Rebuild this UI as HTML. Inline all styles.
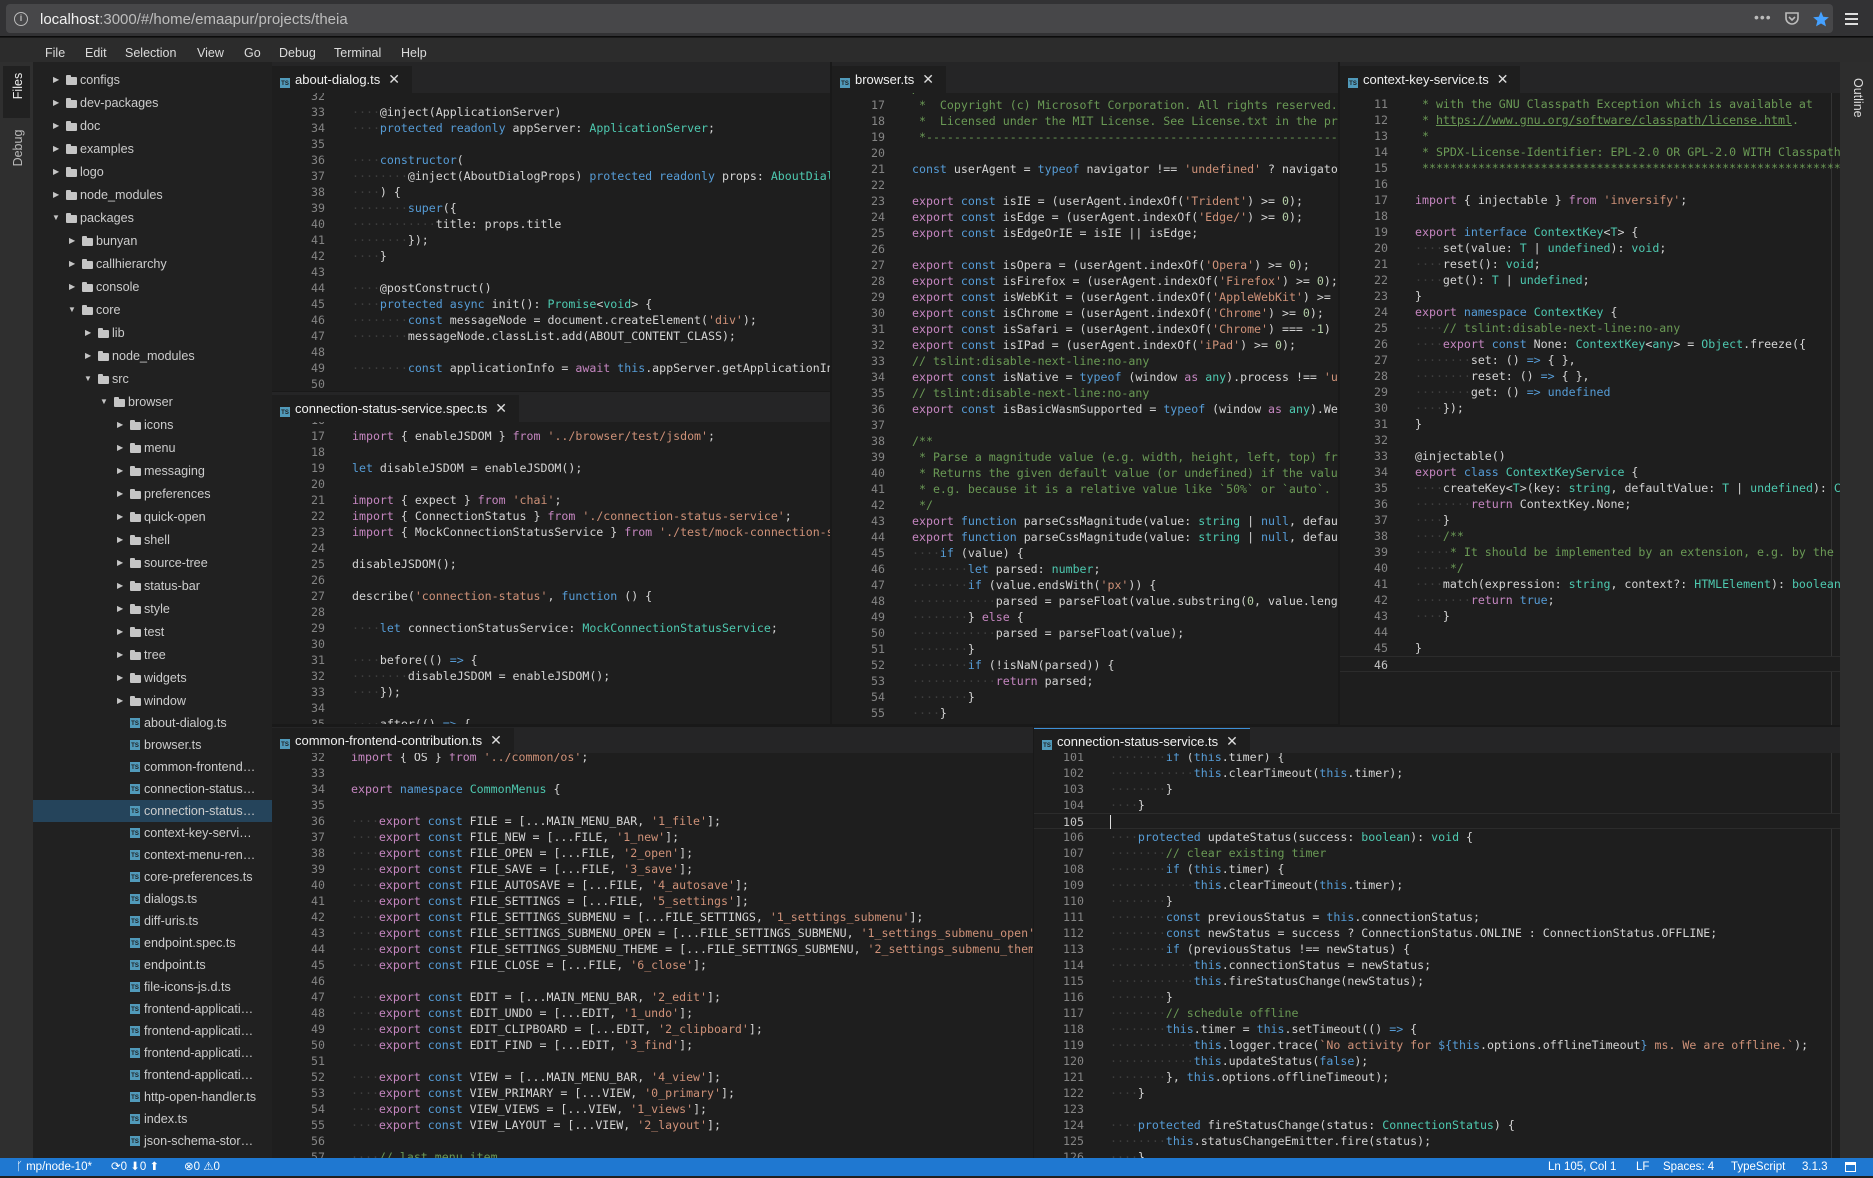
<!DOCTYPE html>
<html><head><meta charset="utf-8"><style>
*{box-sizing:border-box}
body{margin:0;width:1873px;height:1178px;overflow:hidden;position:relative;background:#191919;font-family:"Liberation Sans",sans-serif}
.abs{position:absolute}
.code{font-family:"DejaVu Sans Mono","Liberation Mono",monospace;font-size:11.6px;line-height:16px;color:#d4d4d4}
.l{height:16px;white-space:pre;position:relative}
.l b{display:inline-block;text-align:right;color:#858585;font-weight:normal}
i{font-style:normal;color:#3d3d3d}
.k{color:#569cd6}.p{color:#c586c0}.s{color:#ce9178}.c{color:#6a9955}.t{color:#4ec9b0}.n{color:#b5cea8}.o{color:#a8a8a8}
.pane{position:absolute;background:#1e1e1e;overflow:hidden}
.tb{position:absolute;left:0;right:0;top:0;background:#252526}
.tab{position:absolute;left:0;bottom:0;background:#1e1e1e;color:#f0f0f0;font-size:13px;padding:0 12px 0 8px;white-space:nowrap}
.ts{display:inline-block;width:10px;height:10px;background:#519aba;color:#1e1e1e;font-size:6px;line-height:12px;text-align:center;vertical-align:-1px;margin-right:5px;font-family:"Liberation Sans",sans-serif;font-weight:bold}
.x{margin-left:8px;color:#ddd;font-size:14px}
.bd{position:absolute;left:0;right:0;bottom:0;overflow:hidden}
.in{position:absolute;left:0;right:0}
.cur{background:#1e1e1e;border-top:1px solid #2c2c2c;border-bottom:1px solid #2c2c2c}
.cur b{color:#c6c6c6!important}
.side{position:absolute;left:33px;top:62px;width:239px;height:1096px;background:#212121;overflow:hidden}
.r{position:absolute;left:0;width:239px;height:22px;line-height:22px;font-size:12.6px;color:#cccccc;white-space:nowrap}
.r .tx{position:absolute}
.ar{position:absolute;top:0;font-size:8px;color:#c5c5c5}
.fd{position:absolute;top:8px;width:11px;height:8px;background:#c5c5c5;border-radius:1px}
.fd:before{content:"";position:absolute;left:0;top:-2px;width:5px;height:3px;background:#c5c5c5;border-radius:1px 1px 0 0}
.fi{position:absolute;top:6px;width:10px;height:10px;background:#519aba;color:#1e1e1e;font-size:6px;line-height:12px;text-align:center;font-weight:bold}
.menu span{position:absolute;top:3px;font-size:12.5px;color:#dcdcdc;line-height:24px}
.sb span{position:absolute;top:0;line-height:18px;font-size:11.5px;color:#fff;white-space:nowrap}
</style></head><body>

<div class="abs" style="left:0;top:0;width:1873px;height:37px;background:#323234;border-bottom:1px solid #0c0c0c"></div>
<div class="abs" style="left:6px;top:4px;width:1827px;height:29px;background:#474749;border-radius:4px"></div>
<div class="abs" style="left:14px;top:12px;width:14px;height:14px;border:1.5px solid #bbb;border-radius:50%;color:#bbb;font-size:9px;line-height:11px;text-align:center;font-weight:bold">i</div>
<div class="abs" style="left:40px;top:11px;font-size:15px;color:#bdbdbd;white-space:nowrap"><span style="color:#f2f2f2">localhost</span>:3000/#/home/emaapur/projects/theia</div>
<div class="abs" style="left:1754px;top:9px;font-size:14px;color:#bbb;letter-spacing:1px">•••</div>
<svg class="abs" style="left:1784px;top:11px" width="16" height="16" viewBox="0 0 16 16"><path d="M2 2h12v5a6 6 0 0 1-12 0z" fill="none" stroke="#bbb" stroke-width="1.6"/><path d="M5 6l3 3 3-3" fill="none" stroke="#bbb" stroke-width="1.6"/></svg>
<svg class="abs" style="left:1812px;top:10px" width="18" height="18" viewBox="0 0 24 24"><path d="M12 2l3 7 7.5.6-5.7 4.9 1.8 7.4L12 18l-6.6 3.9 1.8-7.4L1.5 9.6 9 9z" fill="#45a1ff"/></svg>
<div class="abs" style="left:1845px;top:13px;width:13px;height:2px;background:#ddd;box-shadow:0 5px 0 #ddd,0 10px 0 #ddd"></div>

<div class="abs menu" style="left:0;top:38px;width:1873px;height:24px;background:#2c2c2c">
<span style="left:45px">File</span><span style="left:85px">Edit</span><span style="left:125px">Selection</span><span style="left:197px">View</span><span style="left:244px">Go</span><span style="left:279px">Debug</span><span style="left:334px">Terminal</span><span style="left:401px">Help</span>
</div>

<div class="abs" style="left:0;top:62px;width:33px;height:1096px;background:#2f2f2f"></div>
<div class="abs" style="left:3px;top:66px;width:27px;height:52px;background:#212121"></div>
<div class="abs" style="left:11px;top:108px;transform:rotate(-90deg);transform-origin:0 0;font-size:12.5px;color:#eee;width:44px;text-align:center">Files</div>
<div class="abs" style="left:11px;top:172px;transform:rotate(-90deg);transform-origin:0 0;font-size:12.5px;color:#bbb;width:48px;text-align:center">Debug</div>

<div class="abs" style="left:1840px;top:62px;width:33px;height:1096px;background:#2d2d2d"></div>
<div class="abs" style="left:1865px;top:78px;transform:rotate(90deg);transform-origin:0 0;font-size:12.5px;color:#ddd">Outline</div>

<div class="side">
<div class="r" style="top:7px"><span class="ar" style="left:20px">▶</span><span class="fd" style="left:33px"></span><span class="tx" style="left:47px">configs</span></div>
<div class="r" style="top:30px"><span class="ar" style="left:20px">▶</span><span class="fd" style="left:33px"></span><span class="tx" style="left:47px">dev-packages</span></div>
<div class="r" style="top:53px"><span class="ar" style="left:20px">▶</span><span class="fd" style="left:33px"></span><span class="tx" style="left:47px">doc</span></div>
<div class="r" style="top:76px"><span class="ar" style="left:20px">▶</span><span class="fd" style="left:33px"></span><span class="tx" style="left:47px">examples</span></div>
<div class="r" style="top:99px"><span class="ar" style="left:20px">▶</span><span class="fd" style="left:33px"></span><span class="tx" style="left:47px">logo</span></div>
<div class="r" style="top:122px"><span class="ar" style="left:20px">▶</span><span class="fd" style="left:33px"></span><span class="tx" style="left:47px">node_modules</span></div>
<div class="r" style="top:145px"><span class="ar" style="left:19px">▼</span><span class="fd" style="left:33px"></span><span class="tx" style="left:47px">packages</span></div>
<div class="r" style="top:168px"><span class="ar" style="left:36px">▶</span><span class="fd" style="left:49px"></span><span class="tx" style="left:63px">bunyan</span></div>
<div class="r" style="top:191px"><span class="ar" style="left:36px">▶</span><span class="fd" style="left:49px"></span><span class="tx" style="left:63px">callhierarchy</span></div>
<div class="r" style="top:214px"><span class="ar" style="left:36px">▶</span><span class="fd" style="left:49px"></span><span class="tx" style="left:63px">console</span></div>
<div class="r" style="top:237px"><span class="ar" style="left:35px">▼</span><span class="fd" style="left:49px"></span><span class="tx" style="left:63px">core</span></div>
<div class="r" style="top:260px"><span class="ar" style="left:52px">▶</span><span class="fd" style="left:65px"></span><span class="tx" style="left:79px">lib</span></div>
<div class="r" style="top:283px"><span class="ar" style="left:52px">▶</span><span class="fd" style="left:65px"></span><span class="tx" style="left:79px">node_modules</span></div>
<div class="r" style="top:306px"><span class="ar" style="left:51px">▼</span><span class="fd" style="left:65px"></span><span class="tx" style="left:79px">src</span></div>
<div class="r" style="top:329px"><span class="ar" style="left:67px">▼</span><span class="fd" style="left:81px"></span><span class="tx" style="left:95px">browser</span></div>
<div class="r" style="top:352px"><span class="ar" style="left:84px">▶</span><span class="fd" style="left:97px"></span><span class="tx" style="left:111px">icons</span></div>
<div class="r" style="top:375px"><span class="ar" style="left:84px">▶</span><span class="fd" style="left:97px"></span><span class="tx" style="left:111px">menu</span></div>
<div class="r" style="top:398px"><span class="ar" style="left:84px">▶</span><span class="fd" style="left:97px"></span><span class="tx" style="left:111px">messaging</span></div>
<div class="r" style="top:421px"><span class="ar" style="left:84px">▶</span><span class="fd" style="left:97px"></span><span class="tx" style="left:111px">preferences</span></div>
<div class="r" style="top:444px"><span class="ar" style="left:84px">▶</span><span class="fd" style="left:97px"></span><span class="tx" style="left:111px">quick-open</span></div>
<div class="r" style="top:467px"><span class="ar" style="left:84px">▶</span><span class="fd" style="left:97px"></span><span class="tx" style="left:111px">shell</span></div>
<div class="r" style="top:490px"><span class="ar" style="left:84px">▶</span><span class="fd" style="left:97px"></span><span class="tx" style="left:111px">source-tree</span></div>
<div class="r" style="top:513px"><span class="ar" style="left:84px">▶</span><span class="fd" style="left:97px"></span><span class="tx" style="left:111px">status-bar</span></div>
<div class="r" style="top:536px"><span class="ar" style="left:84px">▶</span><span class="fd" style="left:97px"></span><span class="tx" style="left:111px">style</span></div>
<div class="r" style="top:559px"><span class="ar" style="left:84px">▶</span><span class="fd" style="left:97px"></span><span class="tx" style="left:111px">test</span></div>
<div class="r" style="top:582px"><span class="ar" style="left:84px">▶</span><span class="fd" style="left:97px"></span><span class="tx" style="left:111px">tree</span></div>
<div class="r" style="top:605px"><span class="ar" style="left:84px">▶</span><span class="fd" style="left:97px"></span><span class="tx" style="left:111px">widgets</span></div>
<div class="r" style="top:628px"><span class="ar" style="left:84px">▶</span><span class="fd" style="left:97px"></span><span class="tx" style="left:111px">window</span></div>
<div class="r" style="top:650px"><span class="fi" style="left:97px">TS</span><span class="tx" style="left:111px">about-dialog.ts</span></div>
<div class="r" style="top:672px"><span class="fi" style="left:97px">TS</span><span class="tx" style="left:111px">browser.ts</span></div>
<div class="r" style="top:694px"><span class="fi" style="left:97px">TS</span><span class="tx" style="left:111px">common-frontend…</span></div>
<div class="r" style="top:716px"><span class="fi" style="left:97px">TS</span><span class="tx" style="left:111px">connection-status…</span></div>
<div class="r" style="top:738px;background:#25445b"><span class="fi" style="left:97px">TS</span><span class="tx" style="left:111px">connection-status…</span></div>
<div class="r" style="top:760px"><span class="fi" style="left:97px">TS</span><span class="tx" style="left:111px">context-key-servi…</span></div>
<div class="r" style="top:782px"><span class="fi" style="left:97px">TS</span><span class="tx" style="left:111px">context-menu-ren…</span></div>
<div class="r" style="top:804px"><span class="fi" style="left:97px">TS</span><span class="tx" style="left:111px">core-preferences.ts</span></div>
<div class="r" style="top:826px"><span class="fi" style="left:97px">TS</span><span class="tx" style="left:111px">dialogs.ts</span></div>
<div class="r" style="top:848px"><span class="fi" style="left:97px">TS</span><span class="tx" style="left:111px">diff-uris.ts</span></div>
<div class="r" style="top:870px"><span class="fi" style="left:97px">TS</span><span class="tx" style="left:111px">endpoint.spec.ts</span></div>
<div class="r" style="top:892px"><span class="fi" style="left:97px">TS</span><span class="tx" style="left:111px">endpoint.ts</span></div>
<div class="r" style="top:914px"><span class="fi" style="left:97px">TS</span><span class="tx" style="left:111px">file-icons-js.d.ts</span></div>
<div class="r" style="top:936px"><span class="fi" style="left:97px">TS</span><span class="tx" style="left:111px">frontend-applicati…</span></div>
<div class="r" style="top:958px"><span class="fi" style="left:97px">TS</span><span class="tx" style="left:111px">frontend-applicati…</span></div>
<div class="r" style="top:980px"><span class="fi" style="left:97px">TS</span><span class="tx" style="left:111px">frontend-applicati…</span></div>
<div class="r" style="top:1002px"><span class="fi" style="left:97px">TS</span><span class="tx" style="left:111px">frontend-applicati…</span></div>
<div class="r" style="top:1024px"><span class="fi" style="left:97px">TS</span><span class="tx" style="left:111px">http-open-handler.ts</span></div>
<div class="r" style="top:1046px"><span class="fi" style="left:97px">TS</span><span class="tx" style="left:111px">index.ts</span></div>
<div class="r" style="top:1068px"><span class="fi" style="left:97px">TS</span><span class="tx" style="left:111px">json-schema-stor…</span></div>
</div>

<div class="pane" style="left:272px;top:62px;width:558px;height:329px">
<div class="tb" style="height:31px"><div class="tab" style="height:27px;line-height:27px"><span class="ts">TS</span>about-dialog.ts<span class="x">✕</span></div></div>
<div class="bd code" style="top:31px"><div class="in" style="top:-5px">
<style>.p1 b{width:53px;margin-right:27px}</style>
<div class="p1">
<div class="l"><b>32</b></div>
<div class="l"><b>33</b><i>····</i>@inject(ApplicationServer)</div>
<div class="l"><b>34</b><i>····</i><span class="k">protected</span> <span class="k">readonly</span> appServer: <span class="t">ApplicationServer</span>;</div>
<div class="l"><b>35</b></div>
<div class="l"><b>36</b><i>····</i><span class="k">constructor</span>(</div>
<div class="l"><b>37</b><i>········</i>@inject(AboutDialogProps) <span class="k">protected</span> <span class="k">readonly</span> props: <span class="t">AboutDialogProps</span></div>
<div class="l"><b>38</b><i>····</i>) {</div>
<div class="l"><b>39</b><i>········</i><span class="k">super</span>({</div>
<div class="l"><b>40</b><i>············</i>title: props.title</div>
<div class="l"><b>41</b><i>········</i>});</div>
<div class="l"><b>42</b><i>····</i>}</div>
<div class="l"><b>43</b></div>
<div class="l"><b>44</b><i>····</i>@postConstruct()</div>
<div class="l"><b>45</b><i>····</i><span class="k">protected</span> <span class="k">async</span> init(): <span class="t">Promise</span>&lt;<span class="t">void</span>&gt; {</div>
<div class="l"><b>46</b><i>········</i><span class="k">const</span> messageNode = document.createElement(<span class="s">'div'</span>);</div>
<div class="l"><b>47</b><i>········</i>messageNode.classList.add(ABOUT_CONTENT_CLASS);</div>
<div class="l"><b>48</b></div>
<div class="l"><b>49</b><i>········</i><span class="k">const</span> applicationInfo = <span class="p">await</span> <span class="k">this</span>.appServer.getApplicationInfo();</div>
<div class="l"><b>50</b></div>
<div class="l"><b>51</b></div>
</div></div></div></div>

<div class="pane" style="left:272px;top:392px;width:558px;height:332px">
<div class="tb" style="height:30px"><div class="tab" style="height:27px;line-height:27px"><span class="ts">TS</span>connection-status-service.spec.ts<span class="x">✕</span></div></div>
<div class="bd code" style="top:30px"><div class="in" style="top:-10px"><div class="p1">
<div class="l"><b>16</b></div>
<div class="l"><b>17</b><span class="p">import</span> { enableJSDOM } <span class="p">from</span> <span class="s">'../browser/test/jsdom'</span>;</div>
<div class="l"><b>18</b></div>
<div class="l"><b>19</b><span class="k">let</span> disableJSDOM = enableJSDOM();</div>
<div class="l"><b>20</b></div>
<div class="l"><b>21</b><span class="p">import</span> { expect } <span class="p">from</span> <span class="s">'chai'</span>;</div>
<div class="l"><b>22</b><span class="p">import</span> { ConnectionStatus } <span class="p">from</span> <span class="s">'./connection-status-service'</span>;</div>
<div class="l"><b>23</b><span class="p">import</span> { MockConnectionStatusService } <span class="p">from</span> <span class="s">'./test/mock-connection-status'</span>;</div>
<div class="l"><b>24</b></div>
<div class="l"><b>25</b>disableJSDOM();</div>
<div class="l"><b>26</b></div>
<div class="l"><b>27</b>describe(<span class="s">'connection-status'</span>, <span class="k">function</span> () {</div>
<div class="l"><b>28</b></div>
<div class="l"><b>29</b><i>····</i><span class="k">let</span> connectionStatusService: <span class="t">MockConnectionStatusService</span>;</div>
<div class="l"><b>30</b></div>
<div class="l"><b>31</b><i>····</i>before(() <span class="k">=&gt;</span> {</div>
<div class="l"><b>32</b><i>········</i>disableJSDOM = enableJSDOM();</div>
<div class="l"><b>33</b><i>····</i>});</div>
<div class="l"><b>34</b></div>
<div class="l"><b>35</b><i>····</i>after(() <span class="k">=&gt;</span> {</div>
</div></div></div></div>

<div class="pane" style="left:832px;top:62px;width:506px;height:662px">
<div class="tb" style="height:31px"><div class="tab" style="height:27px;line-height:27px"><span class="ts">TS</span>browser.ts<span class="x">✕</span></div></div>
<div class="bd code" style="top:31px"><div class="in" style="top:-12px"><div class="p1">
<div class="l"><b>16</b><span class="c">/*---------------------------------------------------------------------------------------------</span></div>
<div class="l"><b>17</b><span class="c"> *  Copyright (c) Microsoft Corporation. All rights reserved.</span></div>
<div class="l"><b>18</b><span class="c"> *  Licensed under the MIT License. See License.txt in the project root for license information.</span></div>
<div class="l"><b>19</b><span class="c"> *--------------------------------------------------------------------------------------------*/</span></div>
<div class="l"><b>20</b></div>
<div class="l"><b>21</b><span class="k">const</span> userAgent = <span class="k">typeof</span> navigator !== <span class="s">'undefined'</span> ? navigator.userAgent : <span class="s">''</span>;</div>
<div class="l"><b>22</b></div>
<div class="l"><b>23</b><span class="p">export</span> <span class="k">const</span> isIE = (userAgent.indexOf(<span class="s">'Trident'</span>) &gt;= <span class="n">0</span>);</div>
<div class="l"><b>24</b><span class="p">export</span> <span class="k">const</span> isEdge = (userAgent.indexOf(<span class="s">'Edge/'</span>) &gt;= <span class="n">0</span>);</div>
<div class="l"><b>25</b><span class="p">export</span> <span class="k">const</span> isEdgeOrIE = isIE || isEdge;</div>
<div class="l"><b>26</b></div>
<div class="l"><b>27</b><span class="p">export</span> <span class="k">const</span> isOpera = (userAgent.indexOf(<span class="s">'Opera'</span>) &gt;= <span class="n">0</span>);</div>
<div class="l"><b>28</b><span class="p">export</span> <span class="k">const</span> isFirefox = (userAgent.indexOf(<span class="s">'Firefox'</span>) &gt;= <span class="n">0</span>);</div>
<div class="l"><b>29</b><span class="p">export</span> <span class="k">const</span> isWebKit = (userAgent.indexOf(<span class="s">'AppleWebKit'</span>) &gt;= <span class="n">0</span>);</div>
<div class="l"><b>30</b><span class="p">export</span> <span class="k">const</span> isChrome = (userAgent.indexOf(<span class="s">'Chrome'</span>) &gt;= <span class="n">0</span>);</div>
<div class="l"><b>31</b><span class="p">export</span> <span class="k">const</span> isSafari = (userAgent.indexOf(<span class="s">'Chrome'</span>) === <span class="n">-1</span>) &amp;&amp; (userAgent.indexOf('Safari') &gt;= 0);</div>
<div class="l"><b>32</b><span class="p">export</span> <span class="k">const</span> isIPad = (userAgent.indexOf(<span class="s">'iPad'</span>) &gt;= <span class="n">0</span>);</div>
<div class="l"><b>33</b><span class="c">// tslint:disable-next-line:no-any</span></div>
<div class="l"><b>34</b><span class="p">export</span> <span class="k">const</span> isNative = <span class="k">typeof</span> (window <span class="p">as</span> <span class="t">any</span>).process !== <span class="s">'undefined'</span>;</div>
<div class="l"><b>35</b><span class="c">// tslint:disable-next-line:no-any</span></div>
<div class="l"><b>36</b><span class="p">export</span> <span class="k">const</span> isBasicWasmSupported = <span class="k">typeof</span> (window <span class="p">as</span> <span class="t">any</span>).WebAssembly === <span class="s">'object'</span>;</div>
<div class="l"><b>37</b></div>
<div class="l"><b>38</b><span class="c">/**</span></div>
<div class="l"><b>39</b><span class="c"> * Parse a magnitude value (e.g. width, height, left, top) from a CSS attribute value.</span></div>
<div class="l"><b>40</b><span class="c"> * Returns the given default value (or undefined) if the value cannot be determined,</span></div>
<div class="l"><b>41</b><span class="c"> * e.g. because it is a relative value like `50%` or `auto`.</span></div>
<div class="l"><b>42</b><span class="c"> */</span></div>
<div class="l"><b>43</b><span class="p">export</span> <span class="k">function</span> parseCssMagnitude(value: <span class="t">string</span> | <span class="k">null</span>, defaultValue: <span class="t">number</span>): <span class="t">number</span>;</div>
<div class="l"><b>44</b><span class="p">export</span> <span class="k">function</span> parseCssMagnitude(value: <span class="t">string</span> | <span class="k">null</span>, defaultValue?: <span class="t">number</span>): <span class="t">number</span> | <span class="t">undefined</span> {</div>
<div class="l"><b>45</b><i>····</i><span class="k">if</span> (value) {</div>
<div class="l"><b>46</b><i>········</i><span class="k">let</span> parsed: <span class="t">number</span>;</div>
<div class="l"><b>47</b><i>········</i><span class="k">if</span> (value.endsWith(<span class="s">'px'</span>)) {</div>
<div class="l"><b>48</b><i>············</i>parsed = parseFloat(value.substring(<span class="n">0</span>, value.length - <span class="n">2</span>));</div>
<div class="l"><b>49</b><i>········</i>} <span class="p">else</span> {</div>
<div class="l"><b>50</b><i>············</i>parsed = parseFloat(value);</div>
<div class="l"><b>51</b><i>········</i>}</div>
<div class="l"><b>52</b><i>········</i><span class="k">if</span> (!isNaN(parsed)) {</div>
<div class="l"><b>53</b><i>············</i><span class="p">return</span> parsed;</div>
<div class="l"><b>54</b><i>········</i>}</div>
<div class="l"><b>55</b><i>····</i>}</div>
</div></div></div></div>

<div class="pane" style="left:1340px;top:62px;width:500px;height:663px">
<div class="tb" style="height:31px"><div class="tab" style="height:27px;line-height:27px"><span class="ts">TS</span>context-key-service.ts<span class="x">✕</span></div></div>
<div class="abs" style="left:491px;top:31px;width:1px;height:632px;background:#333"></div>
<div class="bd code" style="top:31px"><div class="in" style="top:3px">
<style>.p4 b{width:48px;margin-right:27px}</style><div class="p4">
<div class="l"><b>11</b><span class="c"> * with the GNU Classpath Exception which is available at</span></div>
<div class="l"><b>12</b><span class="c"> * <u>https://www.gnu.org/software/classpath/license.html</u>.</span></div>
<div class="l"><b>13</b><span class="c"> *</span></div>
<div class="l"><b>14</b><span class="c"> * SPDX-License-Identifier: EPL-2.0 OR GPL-2.0 WITH Classpath-exception-2.0</span></div>
<div class="l"><b>15</b><span class="c"> ********************************************************************************/</span></div>
<div class="l"><b>16</b></div>
<div class="l"><b>17</b><span class="p">import</span> { injectable } <span class="p">from</span> <span class="s">'inversify'</span>;</div>
<div class="l"><b>18</b></div>
<div class="l"><b>19</b><span class="p">export</span> <span class="k">interface</span> <span class="t">ContextKey</span>&lt;<span class="t">T</span>&gt; {</div>
<div class="l"><b>20</b><i>····</i>set(value: <span class="t">T</span> | <span class="t">undefined</span>): <span class="t">void</span>;</div>
<div class="l"><b>21</b><i>····</i>reset(): <span class="t">void</span>;</div>
<div class="l"><b>22</b><i>····</i>get(): <span class="t">T</span> | <span class="t">undefined</span>;</div>
<div class="l"><b>23</b>}</div>
<div class="l"><b>24</b><span class="p">export</span> <span class="k">namespace</span> <span class="t">ContextKey</span> {</div>
<div class="l"><b>25</b><i>····</i><span class="c">// tslint:disable-next-line:no-any</span></div>
<div class="l"><b>26</b><i>····</i><span class="p">export</span> <span class="k">const</span> None: <span class="t">ContextKey</span>&lt;<span class="t">any</span>&gt; = <span class="t">Object</span>.freeze({</div>
<div class="l"><b>27</b><i>········</i>set: () <span class="k">=&gt;</span> { },</div>
<div class="l"><b>28</b><i>········</i>reset: () <span class="k">=&gt;</span> { },</div>
<div class="l"><b>29</b><i>········</i>get: () <span class="k">=&gt;</span> <span class="k">undefined</span></div>
<div class="l"><b>30</b><i>····</i>});</div>
<div class="l"><b>31</b>}</div>
<div class="l"><b>32</b></div>
<div class="l"><b>33</b>@injectable()</div>
<div class="l"><b>34</b><span class="p">export</span> <span class="k">class</span> <span class="t">ContextKeyService</span> {</div>
<div class="l"><b>35</b><i>····</i>createKey&lt;<span class="t">T</span>&gt;(key: <span class="t">string</span>, defaultValue: <span class="t">T</span> | <span class="t">undefined</span>): <span class="t">ContextKey</span>&lt;T&gt; {</div>
<div class="l"><b>36</b><i>········</i><span class="p">return</span> ContextKey.None;</div>
<div class="l"><b>37</b><i>····</i>}</div>
<div class="l"><b>38</b><i>····</i><span class="c">/**</span></div>
<div class="l"><b>39</b><i>·····</i><span class="c">* It should be implemented by an extension, e.g. by the monaco extension.</span></div>
<div class="l"><b>40</b><i>·····</i><span class="c">*/</span></div>
<div class="l"><b>41</b><i>····</i>match(expression: <span class="t">string</span>, context?: <span class="t">HTMLElement</span>): <span class="t">boolean</span> {</div>
<div class="l"><b>42</b><i>········</i><span class="p">return</span> <span class="k">true</span>;</div>
<div class="l"><b>43</b><i>····</i>}</div>
<div class="l"><b>44</b></div>
<div class="l"><b>45</b>}</div>
<div class="l cur"><b>46</b></div>
</div></div></div></div>

<div class="pane" style="left:272px;top:727px;width:761px;height:431px">
<div class="tb" style="height:26px"><div class="tab" style="height:25px;line-height:25px"><span class="ts">TS</span>common-frontend-contribution.ts<span class="x">✕</span></div></div>
<div class="bd code" style="top:26px"><div class="in" style="top:-4px">
<style>.p5 b{width:53px;margin-right:26px}</style><div class="p5">
<div class="l"><b>32</b><span class="p">import</span> { OS } <span class="p">from</span> <span class="s">'../common/os'</span>;</div>
<div class="l"><b>33</b></div>
<div class="l"><b>34</b><span class="p">export</span> <span class="k">namespace</span> <span class="t">CommonMenus</span> {</div>
<div class="l"><b>35</b></div>
<div class="l"><b>36</b><i>····</i><span class="p">export</span> <span class="k">const</span> FILE = [...MAIN_MENU_BAR, <span class="s">'1_file'</span>];</div>
<div class="l"><b>37</b><i>····</i><span class="p">export</span> <span class="k">const</span> FILE_NEW = [...FILE, <span class="s">'1_new'</span>];</div>
<div class="l"><b>38</b><i>····</i><span class="p">export</span> <span class="k">const</span> FILE_OPEN = [...FILE, <span class="s">'2_open'</span>];</div>
<div class="l"><b>39</b><i>····</i><span class="p">export</span> <span class="k">const</span> FILE_SAVE = [...FILE, <span class="s">'3_save'</span>];</div>
<div class="l"><b>40</b><i>····</i><span class="p">export</span> <span class="k">const</span> FILE_AUTOSAVE = [...FILE, <span class="s">'4_autosave'</span>];</div>
<div class="l"><b>41</b><i>····</i><span class="p">export</span> <span class="k">const</span> FILE_SETTINGS = [...FILE, <span class="s">'5_settings'</span>];</div>
<div class="l"><b>42</b><i>····</i><span class="p">export</span> <span class="k">const</span> FILE_SETTINGS_SUBMENU = [...FILE_SETTINGS, <span class="s">'1_settings_submenu'</span>];</div>
<div class="l"><b>43</b><i>····</i><span class="p">export</span> <span class="k">const</span> FILE_SETTINGS_SUBMENU_OPEN = [...FILE_SETTINGS_SUBMENU, <span class="s">'1_settings_submenu_open'</span>];</div>
<div class="l"><b>44</b><i>····</i><span class="p">export</span> <span class="k">const</span> FILE_SETTINGS_SUBMENU_THEME = [...FILE_SETTINGS_SUBMENU, <span class="s">'2_settings_submenu_theme'</span>];</div>
<div class="l"><b>45</b><i>····</i><span class="p">export</span> <span class="k">const</span> FILE_CLOSE = [...FILE, <span class="s">'6_close'</span>];</div>
<div class="l"><b>46</b></div>
<div class="l"><b>47</b><i>····</i><span class="p">export</span> <span class="k">const</span> EDIT = [...MAIN_MENU_BAR, <span class="s">'2_edit'</span>];</div>
<div class="l"><b>48</b><i>····</i><span class="p">export</span> <span class="k">const</span> EDIT_UNDO = [...EDIT, <span class="s">'1_undo'</span>];</div>
<div class="l"><b>49</b><i>····</i><span class="p">export</span> <span class="k">const</span> EDIT_CLIPBOARD = [...EDIT, <span class="s">'2_clipboard'</span>];</div>
<div class="l"><b>50</b><i>····</i><span class="p">export</span> <span class="k">const</span> EDIT_FIND = [...EDIT, <span class="s">'3_find'</span>];</div>
<div class="l"><b>51</b></div>
<div class="l"><b>52</b><i>····</i><span class="p">export</span> <span class="k">const</span> VIEW = [...MAIN_MENU_BAR, <span class="s">'4_view'</span>];</div>
<div class="l"><b>53</b><i>····</i><span class="p">export</span> <span class="k">const</span> VIEW_PRIMARY = [...VIEW, <span class="s">'0_primary'</span>];</div>
<div class="l"><b>54</b><i>····</i><span class="p">export</span> <span class="k">const</span> VIEW_VIEWS = [...VIEW, <span class="s">'1_views'</span>];</div>
<div class="l"><b>55</b><i>····</i><span class="p">export</span> <span class="k">const</span> VIEW_LAYOUT = [...VIEW, <span class="s">'2_layout'</span>];</div>
<div class="l"><b>56</b></div>
<div class="l"><b>57</b><i>····</i><span class="c">// last menu item</span></div>
</div></div></div></div>

<div class="pane" style="left:1034px;top:727px;width:806px;height:431px">
<div class="tb" style="height:26px"><div class="tab" style="height:25px;line-height:25px;border-top:1px solid #3d8fd6"><span class="ts">TS</span>connection-status-service.ts<span class="x">✕</span></div></div>
<div class="abs" style="left:797px;top:26px;width:1px;height:405px;background:#333"></div>
<div class="bd code" style="top:26px"><div class="in" style="top:-4px">
<style>.p6 b{width:50px;margin-right:26px}</style><div class="p6">
<div class="l"><b>101</b><i>········</i><span class="k">if</span> (<span class="k">this</span>.timer) {</div>
<div class="l"><b>102</b><i>············</i><span class="k">this</span>.clearTimeout(<span class="k">this</span>.timer);</div>
<div class="l"><b>103</b><i>········</i>}</div>
<div class="l"><b>104</b><i>····</i>}</div>
<div class="l cur"><b>105</b><span style="border-left:1.5px solid #ddd"></span></div>
<div class="l"><b>106</b><i>····</i><span class="k">protected</span> updateStatus(success: <span class="t">boolean</span>): <span class="t">void</span> {</div>
<div class="l"><b>107</b><i>········</i><span class="c">// clear existing timer</span></div>
<div class="l"><b>108</b><i>········</i><span class="k">if</span> (<span class="k">this</span>.timer) {</div>
<div class="l"><b>109</b><i>············</i><span class="k">this</span>.clearTimeout(<span class="k">this</span>.timer);</div>
<div class="l"><b>110</b><i>········</i>}</div>
<div class="l"><b>111</b><i>········</i><span class="k">const</span> previousStatus = <span class="k">this</span>.connectionStatus;</div>
<div class="l"><b>112</b><i>········</i><span class="k">const</span> newStatus = success ? ConnectionStatus.ONLINE : ConnectionStatus.OFFLINE;</div>
<div class="l"><b>113</b><i>········</i><span class="k">if</span> (previousStatus !== newStatus) {</div>
<div class="l"><b>114</b><i>············</i><span class="k">this</span>.connectionStatus = newStatus;</div>
<div class="l"><b>115</b><i>············</i><span class="k">this</span>.fireStatusChange(newStatus);</div>
<div class="l"><b>116</b><i>········</i>}</div>
<div class="l"><b>117</b><i>········</i><span class="c">// schedule offline</span></div>
<div class="l"><b>118</b><i>········</i><span class="k">this</span>.timer = <span class="k">this</span>.setTimeout(() <span class="k">=&gt;</span> {</div>
<div class="l"><b>119</b><i>············</i><span class="k">this</span>.logger.trace(<span class="s">`No activity for </span><span class="k">${this</span>.options.offlineTimeout<span class="k">}</span><span class="s"> ms. We are offline.`</span>);</div>
<div class="l"><b>120</b><i>············</i><span class="k">this</span>.updateStatus(<span class="k">false</span>);</div>
<div class="l"><b>121</b><i>········</i>}, <span class="k">this</span>.options.offlineTimeout);</div>
<div class="l"><b>122</b><i>····</i>}</div>
<div class="l"><b>123</b></div>
<div class="l"><b>124</b><i>····</i><span class="k">protected</span> fireStatusChange(status: <span class="t">ConnectionStatus</span>) {</div>
<div class="l"><b>125</b><i>········</i><span class="k">this</span>.statusChangeEmitter.fire(status);</div>
<div class="l"><b>126</b><i>····</i>}</div>
</div></div></div></div>

<div class="abs sb" style="left:0;top:1158px;width:1873px;height:18px;background:#1f78d1">
<span style="left:16px">ᚴ mp/node-10*</span>
<span style="left:111px">⟳0 ⬇0 ⬆</span>
<span style="left:184px">⊗0 ⚠0</span>
<span style="left:1548px">Ln 105, Col 1</span>
<span style="left:1636px">LF</span>
<span style="left:1663px">Spaces: 4</span>
<span style="left:1731px">TypeScript</span>
<span style="left:1802px">3.1.3</span>
<span style="left:1845px;top:4px;width:11px;height:10px;border:1.5px solid #fff;border-top-width:3px"></span>
</div>
<div class="abs" style="left:0;top:1176px;width:1873px;height:2px;background:#202020"></div>
</body></html>
